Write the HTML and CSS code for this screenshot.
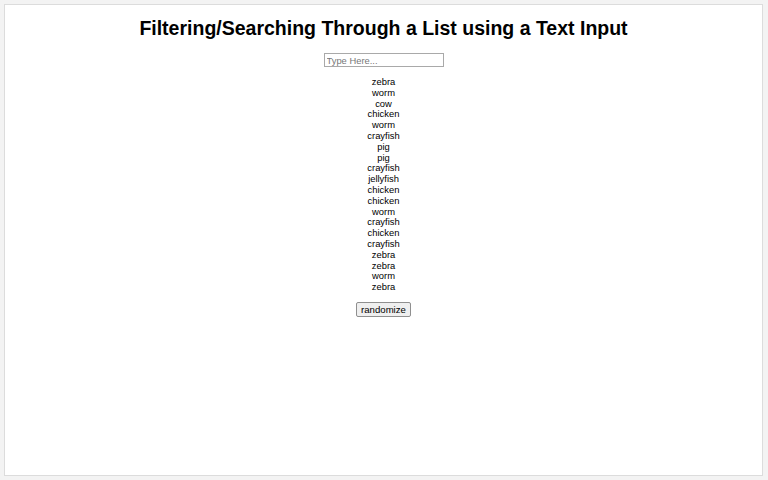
FILE: index.html
```html
<!DOCTYPE html>
<html>
<head>
<meta charset="utf-8">
<link rel="stylesheet" href="styles.css">
</head>
<body>
<div class="card">
  <h1 class="title">Filtering/Searching Through a List using a Text Input</h1>
  <input class="search" type="text" placeholder="Type Here...">
  <ul class="list">
    <li>zebra</li>
    <li>worm</li>
    <li>cow</li>
    <li>chicken</li>
    <li>worm</li>
    <li>crayfish</li>
    <li>pig</li>
    <li>pig</li>
    <li>crayfish</li>
    <li>jellyfish</li>
    <li>chicken</li>
    <li>chicken</li>
    <li>worm</li>
    <li>crayfish</li>
    <li>chicken</li>
    <li>crayfish</li>
    <li>zebra</li>
    <li>zebra</li>
    <li>worm</li>
    <li>zebra</li>
  </ul>
  <button class="btn" type="button">randomize</button>
</div>
</body>
</html>
```
FILE: styles.css
```css
html, body {
  margin: 0;
  padding: 0;
}
body {
  background: #f3f3f3;
  padding: 4px 5px 4px 4px;
  font-family: "Liberation Sans", Arial, sans-serif;
  color: #000;
}
.card {
  box-sizing: border-box;
  height: 472px;
  background: #fff;
  border: 1px solid #dcdcdc;
  display: flex;
  flex-direction: column;
  align-items: center;
  padding-top: 12px;
}
.title {
  margin: 0;
  font-size: 19.5px;
  line-height: 23px;
  font-weight: bold;
}
.search {
  margin-top: 13px;
  box-sizing: border-box;
  width: 120px;
  height: 14px;
  padding: 0 2px;
  border: 1px solid #a9a9a9;
  font-family: "Liberation Sans", Arial, sans-serif;
  font-size: 9.4px;
  outline: none;
}
.search::placeholder {
  color: #777;
}
.list {
  list-style: none;
  margin: 10px 0 0;
  padding: 0;
  text-align: center;
  font-size: 9.4px;
  line-height: 10.8px;
}
.btn {
  margin-top: 9px;
  box-sizing: border-box;
  width: 55px;
  height: 15px;
  padding: 0;
  font-family: "Liberation Sans", Arial, sans-serif;
  font-size: 9.6px;
  line-height: 13px;
  color: #000;
  background: #efefef;
  border: 1px solid #8f8f8f;
  border-radius: 2px;
}
```
